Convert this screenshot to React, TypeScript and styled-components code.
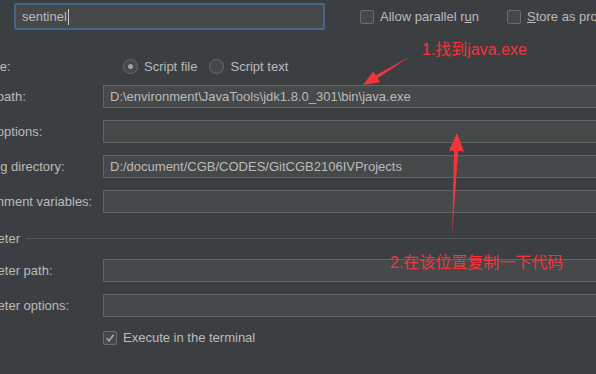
import React from "react"
import styled, { createGlobalStyle } from "styled-components"

const GlobalStyle = createGlobalStyle`
  html, body {
    margin: 0;
    padding: 0;
    background: #3c3f41;
    overflow: hidden;
  }
`

const RED = "#f5333a"

export default function App() {
  return (
    <>
      <GlobalStyle />
      <Page>
        <Form>
          <TopRow>
            <NameLabel>Name:</NameLabel>
            <NameInput>
              sentinel<Caret />
            </NameInput>
            <CheckOption $gap={35}>
              <Box />
              <span>
                Allow parallel r<u>u</u>n
              </span>
            </CheckOption>
            <CheckOption $gap={28}>
              <Box />
              <span>
                <u>S</u>tore as project file
              </span>
            </CheckOption>
          </TopRow>

          <ExecuteRow>
            <Label>Execute:</Label>
            <Radios>
              <RadioOption>
                <Radio $checked />
                Script file
              </RadioOption>
              <RadioOption>
                <Radio />
                Script text
              </RadioOption>
            </Radios>
          </ExecuteRow>

          <Fields>
            <Row>
              <Label>Script path:</Label>
              <Input>D:\environment\JavaTools\jdk1.8.0_301\bin\java.exe</Input>
            </Row>
            <Row>
              <Label>Script options:</Label>
              <Input />
            </Row>
            <Row>
              <Label>Working directory:</Label>
              <Input>D:/document/CGB/CODES/GitCGB2106IVProjects</Input>
            </Row>
            <Row>
              <Label>Environment variables:</Label>
              <Input />
            </Row>
          </Fields>

          <Separator>
            <span>Interpreter</span>
            <Line />
          </Separator>

          <Fields>
            <Row>
              <Label>Interpreter path:</Label>
              <Input />
            </Row>
            <Row>
              <Label>Interpreter options:</Label>
              <Input />
            </Row>
          </Fields>

          <TerminalRow>
            <span />
            <CheckOption $gap={0}>
              <Box $checked>
                <svg width="10" height="10" viewBox="0 0 10 10">
                  <path d="M1.5 5.2 L4 7.8 L8.6 1.8" fill="none" stroke="#a8a8a8" strokeWidth="1.6" />
                </svg>
              </Box>
              <span>Execute in the terminal</span>
            </CheckOption>
          </TerminalRow>

          <SectionTitle>Before launch</SectionTitle>
        </Form>

        <Arrows width="596" height="374" viewBox="0 0 596 374">
          <polygon
            points="410,56.5 375.8,75.3 373.4,71.2 363,85 380,82.3 377.6,78.3"
            fill={RED}
          />
          <polygon
            points="457,133 464,151.4 458.2,151 452.2,235 454,150.9 449,150.6"
            fill={RED}
          />
        </Arrows>
        <Note $x={422} $y={39}>1.找到java.exe</Note>
        <Note $x={390} $y={252}>2.在该位置复制一下代码</Note>
      </Page>
    </>
  )
}

const Page = styled.div`
  position: relative;
  width: 596px;
  height: 374px;
  overflow: hidden;
  background: #3c3f41;
  font-family: "Liberation Sans", "Noto Sans CJK SC", sans-serif;
  font-size: 13px;
  color: #bbbbbb;
`

const Form = styled.div`
  display: flex;
  flex-direction: column;
  width: 800px;
  margin-left: -40px;
  padding-top: 3px;
`

const TopRow = styled.div`
  display: flex;
  align-items: center;
  height: 27px;
`

const NameLabel = styled.span`
  width: 54px;
`

const NameInput = styled.div`
  box-sizing: border-box;
  width: 311px;
  height: 27px;
  display: flex;
  align-items: center;
  padding-left: 6px;
  background: #45494a;
  border: 2px solid #41678f;
  border-radius: 2px;
  color: #bbbbbb;
`

const Caret = styled.span`
  display: inline-block;
  width: 1px;
  height: 16px;
  margin-left: 1px;
  background: #c8c8c8;
`

const CheckOption = styled.label<{ $gap: number }>`
  display: flex;
  align-items: center;
  gap: 6px;
  margin-left: ${(p) => p.$gap}px;
  white-space: nowrap;

  u {
    text-decoration-color: #bbbbbb;
  }
`

const Box = styled.span<{ $checked?: boolean }>`
  box-sizing: border-box;
  display: flex;
  align-items: center;
  justify-content: center;
  width: 14px;
  height: 14px;
  border: 1px solid #6b6b6b;
  border-radius: 2px;
  background: #43494a;
`

const Label = styled.span`
  white-space: nowrap;
`

const ExecuteRow = styled.div`
  display: grid;
  grid-template-columns: 143px 1fr;
  align-items: center;
  height: 23px;
  margin-top: 25px;
  margin-bottom: 7px;
`

const Radios = styled.div`
  display: flex;
  align-items: center;
  gap: 12px;
  padding-left: 20px;
`

const RadioOption = styled.label`
  display: flex;
  align-items: center;
  gap: 6px;
`

const Radio = styled.span<{ $checked?: boolean }>`
  box-sizing: border-box;
  width: 15px;
  height: 15px;
  border-radius: 50%;
  border: 1px solid #6b6b6b;
  background: #43494a;
  display: flex;
  align-items: center;
  justify-content: center;

  &::after {
    content: "";
    display: ${(p) => (p.$checked ? "block" : "none")};
    width: 5px;
    height: 5px;
    border-radius: 50%;
    background: #a0a0a0;
  }
`

const Fields = styled.div`
  display: flex;
  flex-direction: column;
  gap: 12px;
`

const Row = styled.div`
  display: grid;
  grid-template-columns: 143px 1fr;
  align-items: center;
`

const Input = styled.div`
  box-sizing: border-box;
  height: 23px;
  display: flex;
  align-items: center;
  padding-left: 6px;
  background: #45494a;
  border: 1px solid #646464;
  color: #bbbbbb;
  white-space: nowrap;
`

const Separator = styled.div`
  display: flex;
  align-items: center;
  gap: 6px;
  height: 20px;
  margin: 15px 0 11px;
  white-space: nowrap;
`

const Line = styled.div`
  flex: 1;
  height: 1px;
  background: #555758;
`

const TerminalRow = styled.div`
  display: grid;
  grid-template-columns: 143px 1fr;
  align-items: center;
  height: 23px;
  margin-top: 9px;
`

const SectionTitle = styled.div`
  height: 20px;
  margin-top: 24px;
  padding-left: 20px;
  white-space: nowrap;
`

const Arrows = styled.svg`
  position: absolute;
  left: 0;
  top: 0;
  pointer-events: none;
`

const Note = styled.div<{ $x: number; $y: number }>`
  position: absolute;
  left: ${(p) => p.$x}px;
  top: ${(p) => p.$y}px;
  color: ${RED};
  font-size: 16px;
  line-height: 22px;
  white-space: nowrap;
`
